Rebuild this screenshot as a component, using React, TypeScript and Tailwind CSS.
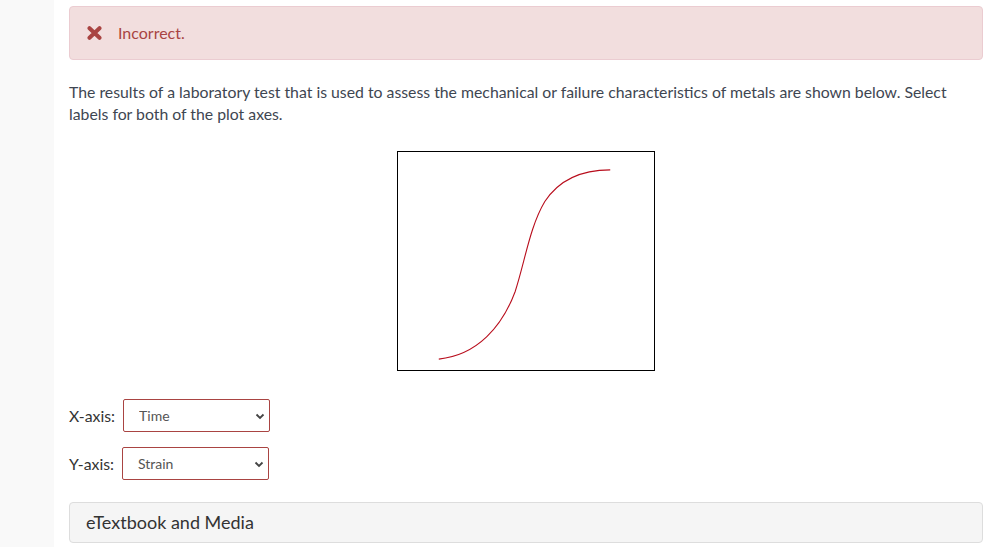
import { useState } from 'react';

type AxisSelectProps = {
  label: string;
  value: string;
  onChange: (value: string) => void;
};

const options = ['Time', 'Stress', 'Strain', 'Temperature', 'Load'];

function AxisSelect({ label, value, onChange }: AxisSelectProps) {
  return (
    <label className="flex items-center gap-[8px]">
      <span className="text-[15.8px] text-[#333]">{label}</span>
      <span className="relative">
        <select
          value={value}
          onChange={(event) => onChange(event.target.value)}
          className="h-[33px] w-[147px] appearance-none rounded-[2px] border border-[#a94442] bg-white pl-[15px] pr-6 text-[14px] text-[#555] outline-none"
        >
          {options.map((option) => (
            <option key={option}>{option}</option>
          ))}
        </select>
        <svg
          className="pointer-events-none absolute right-[5px] top-1/2 -translate-y-1/2"
          width="10"
          height="8"
          viewBox="0 0 10 8"
          aria-hidden="true"
        >
          <path d="M1.5 2.5 5 6l3.5-3.5" fill="none" stroke="#444" strokeWidth="1.8" />
        </svg>
      </span>
    </label>
  );
}

export default function App() {
  const [xAxis, setXAxis] = useState('Time');
  const [yAxis, setYAxis] = useState('Strain');

  return (
    <div className="flex min-h-[547px] w-full bg-white font-['Lato','Liberation_Sans',sans-serif]">
      <aside className="w-[54px] shrink-0 bg-[#f9f9f9]" />
      <main className="flex min-w-0 flex-1 flex-col pl-[15px] pr-[14px] pt-[6px]">
        <div className="flex h-[54px] items-center gap-[16px] rounded-[4px] border border-[#ebccd1] bg-[#f2dede] pl-[17px] text-[16px] text-[#a94442]">
          <svg width="15" height="14" viewBox="0 0 15 14" aria-hidden="true">
            <path d="M2.5 2.2 12.5 11.8M12.5 2.2 2.5 11.8" stroke="#a94442" strokeWidth="4" strokeLinecap="round" />
          </svg>
          <span>Incorrect.</span>
        </div>

        <p className="mt-[21px] text-[15.8px] leading-[22px] text-[#3e4651]">
          The results of a laboratory test that is used to assess the mechanical or failure characteristics of metals are shown below. Select
          labels for both of the plot axes.
        </p>

        <div className="mt-[26px] flex justify-center">
          <svg width="258" height="220" viewBox="0 0 258 220" className="border border-black bg-white" role="img">
            <path
              d="M41 209C80 205 105 176 118 141C128 110 133 75 148 50C163 27 185 18 214 18"
              fill="none"
              stroke="#b80d1c"
              strokeWidth="1.1"
            />
          </svg>
        </div>

        <div className="mt-[28px] flex flex-col gap-[15px]">
          <AxisSelect label="X-axis:" value={xAxis} onChange={setXAxis} />
          <AxisSelect label="Y-axis:" value={yAxis} onChange={setYAxis} />
        </div>

        <div className="mt-[22px] flex h-[41px] items-center rounded-[4px] border border-[#ddd] bg-[#f5f5f5] px-[16px] text-[18px] text-[#333]">
          eTextbook and Media
        </div>
      </main>
    </div>
  );
}
